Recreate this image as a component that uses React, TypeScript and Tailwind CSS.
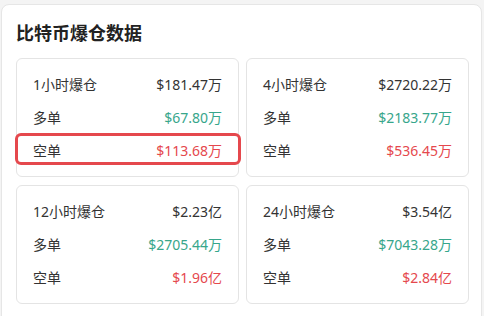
import React from 'react';

type Row = { label: string; value: string; tone: 'dark' | 'green' | 'red' };

const cards: { rows: Row[]; highlight?: number }[] = [
  {
    rows: [
      { label: '1小时爆仓', value: '$181.47万', tone: 'dark' },
      { label: '多单', value: '$67.80万', tone: 'green' },
      { label: '空单', value: '$113.68万', tone: 'red' },
    ],
    highlight: 2,
  },
  {
    rows: [
      { label: '4小时爆仓', value: '$2720.22万', tone: 'dark' },
      { label: '多单', value: '$2183.77万', tone: 'green' },
      { label: '空单', value: '$536.45万', tone: 'red' },
    ],
  },
  {
    rows: [
      { label: '12小时爆仓', value: '$2.23亿', tone: 'dark' },
      { label: '多单', value: '$2705.44万', tone: 'green' },
      { label: '空单', value: '$1.96亿', tone: 'red' },
    ],
  },
  {
    rows: [
      { label: '24小时爆仓', value: '$3.54亿', tone: 'dark' },
      { label: '多单', value: '$7043.28万', tone: 'green' },
      { label: '空单', value: '$2.84亿', tone: 'red' },
    ],
  },
];

const toneClass = {
  dark: 'text-[#333333]',
  green: 'text-[#37a68b]',
  red: 'text-[#e5484d]',
};

export default function App() {
  return (
    <div
      className="h-[316px] w-[484px] overflow-hidden bg-[#f4f4f4] pl-[1px] pr-[2px] pt-[4px]"
      style={{ fontFamily: '"Noto Sans", "Noto Sans CJK SC", sans-serif' }}
    >
      <div className="h-[340px] rounded-lg border border-[#e6e6e6] bg-white pl-[14px] pr-[12px] pt-[15px]">
        <h2 className="mb-3 text-[18px] font-bold leading-[26px] text-[#222222]">比特币爆仓数据</h2>

        <div className="grid grid-cols-2 gap-x-[7px] gap-y-[8px]">
          {cards.map((card, i) => (
            <div key={i} className="rounded-md border border-[#e4e4e4] bg-white py-[9px]">
              {card.rows.map((row, j) => (
                <div key={j} className="relative flex h-[33px] items-center justify-between px-4 text-[14px]">
                  <span className="text-[#333333]">{row.label}</span>
                  <span className={toneClass[row.tone]}>{row.value}</span>
                  {card.highlight === j && (
                    <span className="pointer-events-none absolute -left-[2px] -right-[3px] -top-[1px] bottom-[2px] rounded-md border-[3px] border-[#e5484d]" />
                  )}
                </div>
              ))}
            </div>
          ))}
        </div>
      </div>
    </div>
  );
}
